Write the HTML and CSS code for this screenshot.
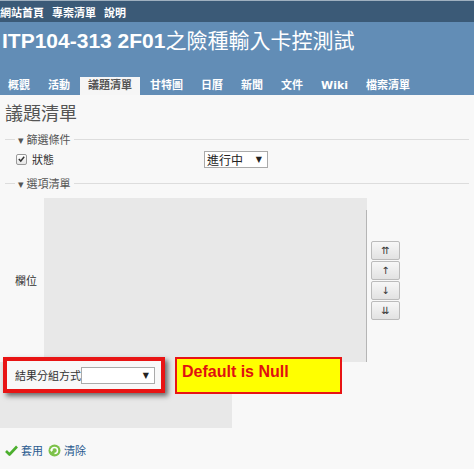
FILE: index.html
```html
<!DOCTYPE html>
<html lang="zh-Hant">
<head>
    <meta charset="UTF-8">
    <meta name="viewport" content="width=device-width, initial-scale=1.0">
    <title>議題清單</title>

    <link rel="stylesheet" href="styles.css">
</head>
<body>

    <div class="top-menu">
        <a href="#">網站首頁</a>
        <a href="#">專案清單</a>
        <a href="#">說明</a>
    </div>

    <div class="header">
        <h1>ITP104-313 2F01<span class="cjk">之險種輸入卡控測試</span></h1>
        <div class="tabs">
            <a href="#">概觀</a>
            <a href="#">活動</a>
            <a href="#" class="selected">議題清單</a>
            <a href="#">甘特圖</a>
            <a href="#">日曆</a>
            <a href="#">新聞</a>
            <a href="#">文件</a>
            <a href="#">Wiki</a>
            <a href="#">檔案清單</a>
        </div>
    </div>

    <div class="content">
        <h2>議題清單</h2>

        <div class="legend"><span>▾ 篩選條件</span></div>
        <div class="filter-row">
            <span class="check">
                <svg width="10" height="10" viewBox="0 0 10 10"><path d="M2 5 L4.2 7.3 L8 2.5" fill="none" stroke="#333" stroke-width="1.6"/></svg>
            </span>
            <span class="filter-label">狀態</span>
            <div class="select status-select"><span>進行中</span><span class="arrow">▼</span></div>
        </div>

        <div class="legend"><span>▾ 選項清單</span></div>
        <div class="columns-row">
            <span class="columns-label">欄位</span>
            <div class="list-box"></div>
            <div class="move-buttons">
                <button>⇈</button>
                <button>↑</button>
                <button>↓</button>
                <button>⇊</button>
            </div>
        </div>

        <div class="group">
            <div class="group-bg"></div>

            <!-- 標註 -->
            <div class="mark-box">
                <span class="group-label">結果分組方式</span>
                <div class="select group-select"><span></span><span class="arrow">▼</span></div>
            </div>
            <div class="note">Default is Null</div>
        </div>

        <div class="actions">
            <a href="#">
                <svg width="13" height="11" viewBox="0 0 13 11"><path d="M1 6 L4.5 9.5 L12 1.5" fill="none" stroke="#4caf2e" stroke-width="2.6" stroke-linejoin="round"/></svg>
                套用
            </a>
            <a href="#">
                <svg width="13" height="13" viewBox="0 0 13 13"><circle cx="6.5" cy="6.5" r="6" fill="#7dc24a"/><path d="M3.5 6.5 A3 3 0 1 1 6.5 9.5" fill="none" stroke="#fff" stroke-width="1.5"/><path d="M1.8 5.6 L3.5 8 L5.3 5.6 Z" fill="#fff"/></svg>
                清除
            </a>
        </div>
    </div>

</body>
</html>
```

FILE: styles.css
```css
* {
    margin: 0;
    padding: 0;
    box-sizing: border-box;
}

body {
    font-family: "Noto Sans CJK TC", sans-serif;
    font-size: 11px;
    background-color: #f8f8f8;
    color: #333;
    width: 474px;
    overflow: hidden;
}

.top-menu {
    height: 22px;
    background-color: #3b5a77;
    border-top: 1px solid #9fb0bf;
    display: flex;
    align-items: center;
}

.top-menu a {
    color: #fff;
    font-weight: bold;
    font-size: 11px;
    text-decoration: none;
    margin-right: 8px;
}

.header {
    background-color: #628db6;
    height: 73px;
    display: flex;
    flex-direction: column;
    justify-content: space-between;
}

.header h1 {
    font-family: "Liberation Sans", "Noto Sans CJK TC", sans-serif;
    font-size: 21px;
    line-height: 26px;
    color: #fff;
    padding: 6px 0 0 2px;
    white-space: nowrap;
}

.header h1 .cjk {
    font-weight: normal;
}

.tabs {
    display: flex;
    height: 18px;
}

.tabs a {
    display: block;
    padding: 0 8px;
    margin-right: 2px;
    font-family: "DejaVu Sans", "Noto Sans CJK TC", sans-serif;
    font-size: 11px;
    font-weight: bold;
    line-height: 18px;
    color: #fff;
    text-decoration: none;
    white-space: nowrap;
}

.tabs a.selected {
    background-color: #f6f6f6;
    color: #555;
}

.content {
    padding: 0 5px;
}

.content h2 {
    font-size: 18px;
    font-weight: normal;
    line-height: 24px;
    color: #555;
    margin-top: 5px;
}

.legend {
    display: flex;
    align-items: center;
    height: 14px;
    margin-top: 8px;
    color: #555;
}

.legend::before {
    content: "";
    width: 10px;
    border-top: 1px solid #ddd;
}

.legend::after {
    content: "";
    flex-grow: 1;
    border-top: 1px solid #ddd;
}

.legend span {
    padding: 0 4px 0 3px;
}

.filter-row {
    display: flex;
    align-items: center;
    height: 18px;
    margin-top: 4px;
    padding-left: 11px;
}

.check {
    width: 11px;
    height: 11px;
    border: 1px solid #999;
    border-radius: 2px;
    background: linear-gradient(#fff, #e6e6e6);
    display: flex;
    align-items: center;
    justify-content: center;
    margin-right: 5px;
}

.filter-label {
    width: 172px;
}

.select {
    display: flex;
    align-items: center;
    justify-content: space-between;
    height: 17px;
    background-color: #fff;
    border: 1px solid #aaa;
    padding: 0 5px 0 2px;
    font-size: 12px;
    color: #222;
}

.select .arrow {
    font-size: 8px;
    font-family: "DejaVu Sans", sans-serif;
}

.status-select {
    width: 64px;
}

.columns-row {
    display: flex;
    align-items: center;
    margin-top: 8px;
    padding-left: 10px;
}

.columns-label {
    width: 29px;
}

.list-box {
    position: relative;
    width: 323px;
    height: 164px;
    background-color: #e8e8e8;
}

.list-box::after {
    content: "";
    position: absolute;
    right: 0;
    top: 12px;
    bottom: 0;
    border-right: 1px solid #b5b5b5;
}

.move-buttons {
    display: flex;
    flex-direction: column;
    gap: 1px;
    margin-left: 4px;
}

.move-buttons button {
    width: 29px;
    height: 19px;
    font-family: "DejaVu Sans", sans-serif;
    font-size: 10px;
    color: #333;
    background: linear-gradient(#f7f7f7, #e2e2e2);
    border: 1px solid #bbb;
    border-radius: 2px;
}

.group {
    position: relative;
    height: 66px;
}

.group-bg {
    width: 232px;
    height: 66px;
    margin-left: -5px;
    background-color: #e8e8e8;
}

.mark-box {
    position: absolute;
    left: -2px;
    top: -5px;
    width: 162px;
    height: 36px;
    display: flex;
    align-items: center;
    gap: 0;
    padding-left: 8px;
    background-color: #f8f8f8;
    border: 4px solid #e81414;
    box-shadow: 3px 3px 5px rgba(0, 0, 0, 0.55);
}

.group-label {
    color: #333;
}

.group-select {
    width: 74px;
}

.note {
    position: absolute;
    left: 170px;
    top: -5px;
    width: 167px;
    height: 37px;
    padding: 4px 5px;
    background-color: #ffff00;
    border: 2px solid #e81414;
    color: #e01010;
    font-family: "Liberation Sans", sans-serif;
    font-size: 16px;
    font-weight: bold;
    line-height: 18px;
}

.actions {
    display: flex;
    align-items: center;
    gap: 5px;
    height: 16px;
    margin-top: 14px;
}

.actions a {
    display: flex;
    align-items: center;
    gap: 3px;
    color: #2a5a8f;
    text-decoration: none;
}
```
